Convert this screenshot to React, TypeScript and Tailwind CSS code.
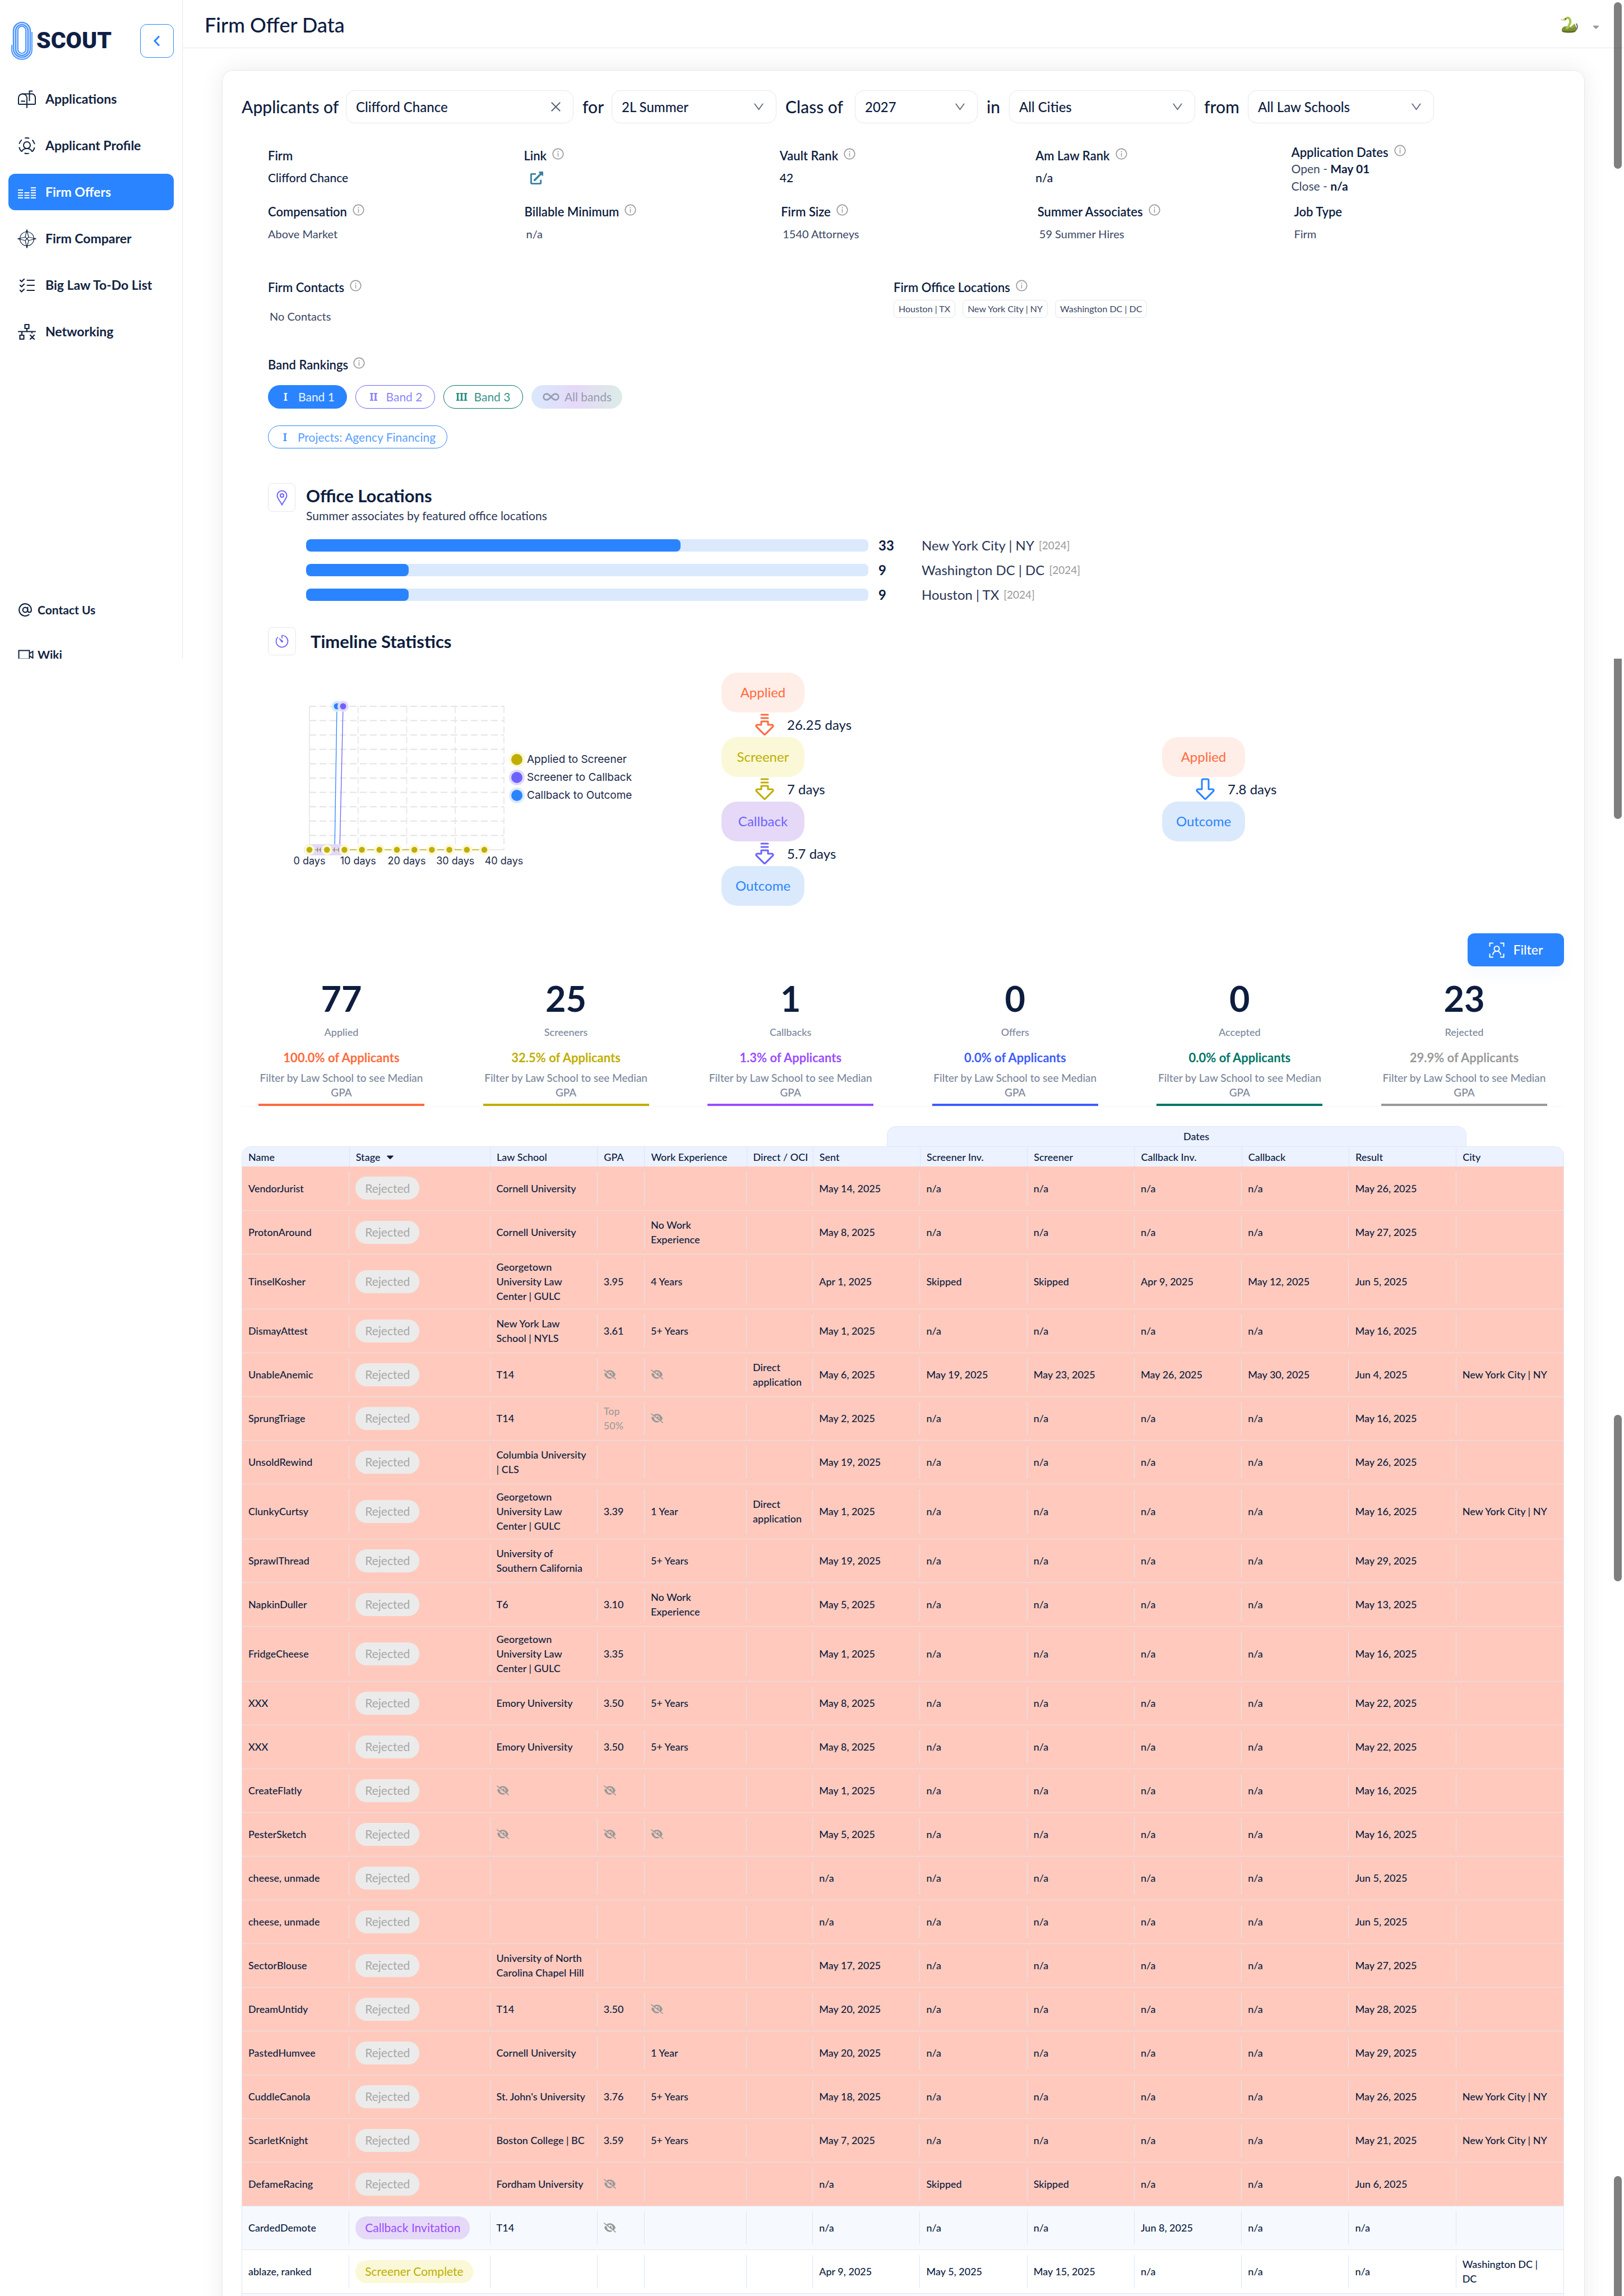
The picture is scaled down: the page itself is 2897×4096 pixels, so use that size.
import React from 'react';
import clsx from 'clsx';
import { AtSign, Infinity as InfinityIcon } from 'lucide-react';
import { AiOutlineClose, AiOutlineDown, AiOutlineInfoCircle } from 'react-icons/ai';
import { FaCaretDown, FaExternalLinkAlt } from 'react-icons/fa';
import { FaEyeSlash } from 'react-icons/fa6';
import { IoTimerOutline } from 'react-icons/io5';
import { TbArrowBigDown, TbArrowBigDownLines } from 'react-icons/tb';

/* ---------- icons ---------- */

const MailboxIcon = () => (
  <svg width="32" height="32" viewBox="0 0 32 32" fill="none" stroke="currentColor" strokeWidth="2" strokeLinecap="round" strokeLinejoin="round">
    <path d="M1 24V13.5a7.5 7 0 0 1 15 0V25H2a1 1 0 0 1-1-1Z" />
    <path d="M8.5 6.5H25a6 7 0 0 1 6 7V24a1 1 0 0 1-1 1H16v6M20.5 18.5V1.5h5M6 19.5h6" />
  </svg>
);

const ProfileIcon = () => (
  <svg width="32" height="32" viewBox="0 0 32 32" fill="none" stroke="currentColor" strokeWidth="2" strokeLinecap="round">
    <circle cx="16" cy="16" r="14" strokeDasharray="7 7.66" strokeDashoffset="3.5" transform="rotate(-90 16 16)" />
    <circle cx="16" cy="15" r="6" />
    <path d="M7 26c1.5-3.5 5-5 9-5s7.5 1.5 9 5" />
  </svg>
);

const BarsIcon = () => (
  <svg width="32" height="32" viewBox="0 0 32 32" fill="none" stroke="currentColor" strokeWidth="2">
    <path d="M0 12h9M0 17h9M0 21.5h9M0 26h9M11.5 17h9M11.5 21.5h9M11.5 26h9M23 8h9M23 12.5h9M23 17h9M23 21.5h9M23 26h9" />
  </svg>
);

const CompassIcon = () => (
  <svg width="34" height="34" viewBox="0 0 34 34" fill="none" stroke="currentColor" strokeWidth="1.2" strokeLinejoin="round">
    <circle cx="17" cy="17" r="12.5" />
    <path fill="white" d="M17 1l3 13 13 3-13 3-3 13-3-13-13-3 13-3Z" />
    <path d="M14 14l6 6M20 14l-6 6" />
    <path fill="currentColor" d="M17 1l1 4h-2ZM17 33l1-4h-2ZM1 17l4-1v2ZM33 17l-4-1v2Z" />
  </svg>
);

const ChecklistIcon = () => (
  <svg width="32" height="32" viewBox="0 0 32 32" fill="none" stroke="currentColor" strokeWidth="2.2" strokeLinecap="round" strokeLinejoin="round">
    <path d="M4 7l2.5 2.5L11 5M4 16l2.5 2.5L11 14M4 25l2.5 2.5L11 23M16.5 7H29M16.5 16H29M16.5 25H29" />
  </svg>
);

const NetworkIcon = () => (
  <svg width="32" height="32" viewBox="0 0 32 32" fill="none" stroke="currentColor" strokeWidth="2.2" strokeLinecap="round" strokeLinejoin="round">
    <path d="M12.5 3h7v7h-7ZM16 10v5M1 15.5h30M7 15.5V22M3.5 22h7v7h-7ZM25 15.5V18M22 22l7 7M29 22l-7 7" />
  </svg>
);

const CameraIcon = () => (
  <svg width="28" height="28" viewBox="0 0 28 28" fill="none" stroke="currentColor" strokeWidth="2">
    <path d="M1.5 6.5h19v15h-19ZM20.5 12l6-4v12l-6-4" />
  </svg>
);

const PinIcon = () => (
  <svg width="20" height="28" viewBox="0 0 20 28" fill="none" stroke="currentColor" strokeWidth="2">
    <path d="M10 26.5C7 20 1.5 15.5 1.5 10a8.5 8.5 0 0 1 17 0c0 5.5-5.5 10-8.5 16.5Z" />
    <circle cx="10" cy="10" r="3" />
  </svg>
);

const ScanUserIcon = () => (
  <svg width="28" height="28" viewBox="0 0 28 28" fill="none" stroke="currentColor" strokeWidth="2" strokeLinecap="round" strokeLinejoin="round">
    <path d="M1.5 7V1.5H7M21 1.5h5.5V7M26.5 21v5.5H21M7 26.5H1.5V21" />
    <circle cx="14" cy="11.5" r="4.5" />
    <path d="M7 22c.5-4 3.5-6 7-6s6.5 2 7 6" />
  </svg>
);

const NumeralIcon = ({ count }: { count: number }) => (
  <svg width="20" height="16" viewBox="0 0 20 16" fill="currentColor">
    {Array.from({ length: count }, (_, i) => {
      const x = 10 - count * 3.5 + i * 7;
      return <path key={i} d={`M${x} 1h6v2h-1.500v10h1.500v2h-6v-2h1.500v-10h-1.500Z`} />;
    })}
  </svg>
);

const SnakeAvatar = () => (
  <svg width="32" height="32" viewBox="0 0 32 32" fill="none">
    <path d="M28 14q4 7-1 12" stroke="#4b4b52" strokeWidth="1.6" />
    <path d="M2 24q2-5 8-5l10 2 6-3q5 5 0 9-6 3-15 3T2 27Z" fill="#7d9138" />
    <path d="M2 26q10 3 26 0-1 4-10 4.500T4 29Z" fill="#5d6f22" />
    <path d="M7 7Q13 1 16 6t-1 11q-1 4-4 5" stroke="#a9c64b" strokeWidth="4" strokeLinecap="round" />
    <path d="M17 21l8-7 2 5-7 4Z" fill="#93aa3c" />
    <circle cx="9" cy="6" r="1" fill="#222" />
    <path d="M5 8L0 7" stroke="#d58f9c" />
  </svg>
);

const LogoMark = () => (
  <svg width="40" height="70" viewBox="0 0 40 70" fill="none" stroke="#2a84ff">
    <rect x="8" y="5" width="24" height="58" rx="12" stroke="#c3dbfb" strokeWidth="9" />
    <rect x="5" y="2" width="30" height="62" rx="15" strokeWidth="1.6" />
    <rect x="9" y="6" width="22" height="55" rx="11" strokeWidth="1.6" />
    <rect x="13" y="9" width="14" height="48" rx="7" strokeWidth="1.6" />
    <path d="M2 42v9a18 17 0 0 0 36 0V19" strokeWidth="1.6" />
  </svg>
);

/* ---------- data ---------- */

const navItems = [
  { label: 'Applications', icon: MailboxIcon },
  { label: 'Applicant Profile', icon: ProfileIcon },
  { label: 'Firm Offers', icon: BarsIcon, active: true },
  { label: 'Firm Comparer', icon: CompassIcon },
  { label: 'Big Law To-Do List', icon: ChecklistIcon },
  { label: 'Networking', icon: NetworkIcon },
];

const offices = [
  { name: 'New York City | NY', count: 33, share: 66.6 },
  { name: 'Washington DC | DC', count: 9, share: 18.2 },
  { name: 'Houston | TX', count: 9, share: 18.2 },
];

const stats = [
  { value: 77, label: 'Applied', pct: '100.0%', text: 'text-[#ff6a3d]', bar: 'bg-[#ff6a3d]' },
  { value: 25, label: 'Screeners', pct: '32.5%', text: 'text-[#c0ae00]', bar: 'bg-[#c0ae00]' },
  { value: 1, label: 'Callbacks', pct: '1.3%', text: 'text-[#9b4dff]', bar: 'bg-[#9b4dff]' },
  { value: 0, label: 'Offers', pct: '0.0%', text: 'text-[#3d5cff]', bar: 'bg-[#3d5cff]' },
  { value: 0, label: 'Accepted', pct: '0.0%', text: 'text-[#007667]', bar: 'bg-[#007667]' },
  { value: 23, label: 'Rejected', pct: '29.9%', text: 'text-[#999999]', bar: 'bg-[#999999]' },
];

const columns = [
  { title: 'Name', width: 'w-[191px]' },
  { title: 'Stage', width: 'w-[251px]' },
  { title: 'Law School', width: 'w-[191px]' },
  { title: 'GPA', width: 'w-[84px]' },
  { title: 'Work Experience', width: 'w-[182px]' },
  { title: 'Direct / OCI', width: 'w-[118px]' },
  { title: 'Sent', width: 'w-[191px]' },
  { title: 'Screener Inv.', width: 'w-[191px]' },
  { title: 'Screener', width: 'w-[191px]' },
  { title: 'Callback Inv.', width: 'w-[191px]' },
  { title: 'Callback', width: 'w-[191px]' },
  { title: 'Result', width: 'w-[191px]' },
  { title: 'City', width: 'w-[191px]' },
];

const HIDDEN = '#hidden';
const GULC = 'Georgetown\nUniversity Law\nCenter | GULC';
const NO_WORK = 'No Work\nExperience';
const DIRECT = 'Direct\napplication';
const NYC = 'New York City | NY';

// name, stage, school, gpa, experience, direct, sent, screener inv, screener, callback inv, callback, result, city
const rows: string[][] = [
  ['VendorJurist', 'Rejected', 'Cornell University', '', '', '', 'May 14, 2025', 'n/a', 'n/a', 'n/a', 'n/a', 'May 26, 2025', ''],
  ['ProtonAround', 'Rejected', 'Cornell University', '', NO_WORK, '', 'May 8, 2025', 'n/a', 'n/a', 'n/a', 'n/a', 'May 27, 2025', ''],
  ['TinselKosher', 'Rejected', GULC, '3.95', '4 Years', '', 'Apr 1, 2025', 'Skipped', 'Skipped', 'Apr 9, 2025', 'May 12, 2025', 'Jun 5, 2025', ''],
  ['DismayAttest', 'Rejected', 'New York Law\nSchool | NYLS', '3.61', '5+ Years', '', 'May 1, 2025', 'n/a', 'n/a', 'n/a', 'n/a', 'May 16, 2025', ''],
  ['UnableAnemic', 'Rejected', 'T14', HIDDEN, HIDDEN, DIRECT, 'May 6, 2025', 'May 19, 2025', 'May 23, 2025', 'May 26, 2025', 'May 30, 2025', 'Jun 4, 2025', NYC],
  ['SprungTriage', 'Rejected', 'T14', 'Top\n50%', HIDDEN, '', 'May 2, 2025', 'n/a', 'n/a', 'n/a', 'n/a', 'May 16, 2025', ''],
  ['UnsoldRewind', 'Rejected', 'Columbia University\n| CLS', '', '', '', 'May 19, 2025', 'n/a', 'n/a', 'n/a', 'n/a', 'May 26, 2025', ''],
  ['ClunkyCurtsy', 'Rejected', GULC, '3.39', '1 Year', DIRECT, 'May 1, 2025', 'n/a', 'n/a', 'n/a', 'n/a', 'May 16, 2025', NYC],
  ['SprawlThread', 'Rejected', 'University of\nSouthern California', '', '5+ Years', '', 'May 19, 2025', 'n/a', 'n/a', 'n/a', 'n/a', 'May 29, 2025', ''],
  ['NapkinDuller', 'Rejected', 'T6', '3.10', NO_WORK, '', 'May 5, 2025', 'n/a', 'n/a', 'n/a', 'n/a', 'May 13, 2025', ''],
  ['FridgeCheese', 'Rejected', GULC, '3.35', '', '', 'May 1, 2025', 'n/a', 'n/a', 'n/a', 'n/a', 'May 16, 2025', ''],
  ['XXX', 'Rejected', 'Emory University', '3.50', '5+ Years', '', 'May 8, 2025', 'n/a', 'n/a', 'n/a', 'n/a', 'May 22, 2025', ''],
  ['XXX', 'Rejected', 'Emory University', '3.50', '5+ Years', '', 'May 8, 2025', 'n/a', 'n/a', 'n/a', 'n/a', 'May 22, 2025', ''],
  ['CreateFlatly', 'Rejected', HIDDEN, HIDDEN, '', '', 'May 1, 2025', 'n/a', 'n/a', 'n/a', 'n/a', 'May 16, 2025', ''],
  ['PesterSketch', 'Rejected', HIDDEN, HIDDEN, HIDDEN, '', 'May 5, 2025', 'n/a', 'n/a', 'n/a', 'n/a', 'May 16, 2025', ''],
  ['cheese, unmade', 'Rejected', '', '', '', '', 'n/a', 'n/a', 'n/a', 'n/a', 'n/a', 'Jun 5, 2025', ''],
  ['cheese, unmade', 'Rejected', '', '', '', '', 'n/a', 'n/a', 'n/a', 'n/a', 'n/a', 'Jun 5, 2025', ''],
  ['SectorBlouse', 'Rejected', 'University of North\nCarolina Chapel Hill', '', '', '', 'May 17, 2025', 'n/a', 'n/a', 'n/a', 'n/a', 'May 27, 2025', ''],
  ['DreamUntidy', 'Rejected', 'T14', '3.50', HIDDEN, '', 'May 20, 2025', 'n/a', 'n/a', 'n/a', 'n/a', 'May 28, 2025', ''],
  ['PastedHumvee', 'Rejected', 'Cornell University', '', '1 Year', '', 'May 20, 2025', 'n/a', 'n/a', 'n/a', 'n/a', 'May 29, 2025', ''],
  ['CuddleCanola', 'Rejected', "St. John's University", '3.76', '5+ Years', '', 'May 18, 2025', 'n/a', 'n/a', 'n/a', 'n/a', 'May 26, 2025', NYC],
  ['ScarletKnight', 'Rejected', 'Boston College | BC', '3.59', '5+ Years', '', 'May 7, 2025', 'n/a', 'n/a', 'n/a', 'n/a', 'May 21, 2025', NYC],
  ['DefameRacing', 'Rejected', 'Fordham University', HIDDEN, '', '', 'n/a', 'Skipped', 'Skipped', 'n/a', 'n/a', 'Jun 6, 2025', ''],
  ['CardedDemote', 'Callback Invitation', 'T14', HIDDEN, '', '', 'n/a', 'n/a', 'n/a', 'Jun 8, 2025', 'n/a', 'n/a', ''],
  ['ablaze, ranked', 'Screener Complete', '', '', '', '', 'Apr 9, 2025', 'May 5, 2025', 'May 15, 2025', 'n/a', 'n/a', 'n/a', 'Washington DC |\nDC'],
];

const stageStyles: Record<string, string> = {
  Rejected: 'bg-[#ebebeb] text-[#a8a8a8]',
  'Callback Invitation': 'bg-[#e5d9f7] text-[#9b4dff]',
  'Screener Complete': 'bg-[#faf8d7] text-[#c0ae00]',
};

/* ---------- sidebar ---------- */

const Sidebar = () => (
  <aside className="w-[326px] h-[1175px] shrink-0 self-start overflow-hidden border-r border-[#e7e7ee]">
    <div className="flex items-center justify-between pl-[19px] pr-[15px] pt-[37px] h-[108px]">
      <a href="#" aria-label="O Scout" className="flex items-center gap-[6px]">
        <LogoMark />
        <span className="font-['Roboto',sans-serif] font-black text-[41px] leading-none text-[#0f1f45]">SCOUT</span>
      </a>
      <button aria-label="Collapse" className="w-[60px] h-[60px] rounded-xl border border-[#2a84ff] flex items-center justify-center text-[#2a84ff]">
        <svg width="14" height="20" viewBox="0 0 14 20" fill="none" stroke="currentColor" strokeWidth="3">
          <path d="M11 1.5L3 10l8 8.5" />
        </svg>
      </button>
    </div>
    <nav className="mt-[36px] px-[15px] flex flex-col gap-[18px]">
      {navItems.map(({ label, icon: Icon, active }) => (
        <a
          key={label}
          href="#"
          className={clsx(
            'h-[65px] rounded-xl flex items-center font-bold text-[23px]',
            active ? 'bg-[#2a84ff] text-white' : 'text-[#11233f]'
          )}
        >
          <span className="w-[66px] flex justify-center">
            <Icon />
          </span>
          {label}
        </a>
      ))}
    </nav>
    <div className="mt-[434px] flex flex-col gap-5 pl-8 font-bold text-[21px] text-[#11233f]">
      <a href="#" className="h-[60px] flex items-center gap-[9px]">
        <AtSign size={26} />
        Contact Us
      </a>
      <a href="#" className="h-[60px] flex items-center gap-[7px]">
        <CameraIcon />
        Wiki
      </a>
    </div>
  </aside>
);

/* ---------- firm details ---------- */

const InfoIcon = () => <AiOutlineInfoCircle size={23} className="text-[#999999] mb-[6px]" />;

interface FieldLabelProps {
  info?: boolean;
  children: React.ReactNode;
}

const FieldLabel: React.FC<FieldLabelProps> = ({ info = true, children }) => (
  <div className="h-7 flex items-center gap-[9px] text-[22px] font-semibold">
    {children}
    {info && <InfoIcon />}
  </div>
);

interface FieldProps {
  label: string;
  info?: boolean;
  light?: boolean;
  className?: string;
  children: React.ReactNode;
}

const Field: React.FC<FieldProps> = ({ label, info = true, light, className, children }) => (
  <div className={className}>
    <FieldLabel info={info}>{label}</FieldLabel>
    <div className={clsx('mt-3 h-7 flex items-center', light ? 'text-[20px] text-[#3b4763]' : 'text-[21px] font-medium')}>{children}</div>
  </div>
);

interface PickerProps {
  id: string;
  value: string;
  width: string;
}

const Picker: React.FC<PickerProps> = ({ id, value, width }) => (
  <div className={clsx('h-[59px] flex items-center rounded-2xl border border-[#e7e7ee] pl-[17px] pr-[19px]', width)}>
    <select id={id} className="flex-1 min-w-0 appearance-none bg-transparent text-[24px] font-medium outline-none">
      <option>{value}</option>
    </select>
    <AiOutlineDown size={23} className="text-[#5b6478] shrink-0" />
  </div>
);

const FilterBar = () => (
  <div className="flex items-center gap-4 text-[30px] font-medium">
    <label htmlFor="firm" className="w-[170px] whitespace-nowrap">Applicants of</label>
    <div className="w-[406px] h-[59px] flex items-center rounded-2xl border border-[#e7e7ee] pl-[17px] pr-[18px]">
      <input id="firm" defaultValue="Clifford Chance" className="flex-1 min-w-0 text-[24px] outline-none" />
      <button aria-label="Clear">
        <AiOutlineClose size={25} className="text-[#5b6478]" />
      </button>
    </div>
    <label htmlFor="season" className="w-[36px]">for</label>
    <Picker id="season" value="2L Summer" width="w-[294px]" />
    <label htmlFor="class" className="w-[108px] whitespace-nowrap">Class of</label>
    <Picker id="class" value="2027" width="w-[219px]" />
    <label htmlFor="city" className="w-[24px]">in</label>
    <Picker id="city" value="All Cities" width="w-[332px]" />
    <label htmlFor="school" className="w-[62px]">from</label>
    <Picker id="school" value="All Law Schools" width="w-[332px]" />
  </div>
);

const FirmDetails = () => (
  <section className="pl-[47px]">
    <div className="mt-[37px] pr-[30px] grid grid-cols-5 h-[91px]">
      <Field label="Firm" info={false} className="pt-[6px]">Clifford Chance</Field>
      <Field label="Link" className="pt-[6px]">
        <a href="#" aria-label="Firm website" className="ml-3 text-[#3a80a2]">
          <FaExternalLinkAlt size={23} />
        </a>
      </Field>
      <Field label="Vault Rank" className="pt-[6px]">42</Field>
      <Field label="Am Law Rank" className="pt-[6px]">n/a</Field>
      <div>
        <FieldLabel>Application Dates</FieldLabel>
        <p className="text-[21px] leading-[31px] text-[#3b4763]">
          Open - <strong className="text-[#0d1d3f]">May 01</strong>
        </p>
        <p className="text-[21px] leading-[31px] text-[#3b4763]">
          Close - <strong className="text-[#0d1d3f]">n/a</strong>
        </p>
      </div>
    </div>
    <div className="mt-[15px] pr-6 grid grid-cols-5">
      <Field label="Compensation" light>Above Market</Field>
      <Field label="Billable Minimum" light><span className="px-[3px]">n/a</span></Field>
      <Field label="Firm Size" light><span className="px-[3px]">1540 Attorneys</span></Field>
      <Field label="Summer Associates" light><span className="px-[3px]">59 Summer Hires</span></Field>
      <Field label="Job Type" info={false} light>Firm</Field>
    </div>
    <div className="mt-[67px] pr-[80px] grid grid-cols-2">
      <div>
        <FieldLabel>Firm Contacts</FieldLabel>
        <p className="mt-[24px] pl-[3px] text-[20px] leading-[28px] text-[#3b4763]">No Contacts</p>
      </div>
      <div>
        <FieldLabel>Firm Office Locations</FieldLabel>
        <div className="mt-[9px] flex gap-[13px] text-[16px] text-[#3b4763]">
          <span className="h-8 px-2 flex items-center rounded-lg border border-[#e7e7ee]">Houston | TX</span>
          <span className="h-8 px-2 flex items-center rounded-lg border border-[#e7e7ee]">New York City | NY</span>
          <span className="h-8 px-2 flex items-center rounded-lg border border-[#e7e7ee]">Washington DC | DC</span>
        </div>
      </div>
    </div>

    <div className="mt-[58px] flex items-center gap-2 text-[22px] font-semibold">
      <FieldLabel info={false}>Band Rankings</FieldLabel>
      <InfoIcon />
    </div>
    <div className="mt-[22px] flex gap-[15px] text-[21px]">
      <button className="w-[141px] h-[42px] rounded-full bg-[#2a84ff] text-white/90 flex items-center justify-center gap-3">
        <NumeralIcon count={1} /> Band 1
      </button>
      <button className="w-[142px] h-[42px] rounded-full border border-[#6c63ff] text-[#6c63ff]/80 flex items-center justify-center gap-3">
        <NumeralIcon count={2} /> Band 2
      </button>
      <button className="w-[142px] h-[42px] rounded-full border border-[#007667] text-[#007667]/80 flex items-center justify-center gap-3">
        <NumeralIcon count={3} /> Band 3
      </button>
      <button className="w-[162px] h-[42px] rounded-full bg-linear-to-r from-[#d9e8fd] via-[#e5d9f7] to-[#dcece6] text-[#949cb0] flex items-center justify-center gap-2">
        <InfinityIcon size={32} strokeWidth={2} /> All bands
      </button>
    </div>
    <button className="mt-[30px] w-[320px] h-[41px] rounded-full border border-[#2a84ff] text-[#2a84ff]/80 flex items-center justify-center gap-3 text-[21px]">
      <NumeralIcon count={1} /> Projects: Agency Financing
    </button>
  </section>
);

/* ---------- office locations ---------- */

const OfficeLocations = () => (
  <section className="mt-[62px] pl-[47px] flex items-start gap-[19px]">
    <div className="w-[49px] h-[51px] rounded-lg border border-[#e7e7ee] flex items-center justify-center text-[#6c63ff]">
      <PinIcon />
    </div>
    <div className="pt-1">
      <h2 className="text-[31px] leading-[36px] font-bold">Office Locations</h2>
      <p className="mt-1 text-[21px] leading-[28px] text-[#2a3655]">Summer associates by featured office locations</p>
      <div className="mt-[17px]">
        {offices.map((office) => (
          <div key={office.name} className="h-11 flex items-center text-[24px]">
            <div className="w-[1003px] h-[22px] rounded-lg bg-[#dbe9fd] overflow-hidden">
              <div className="h-full rounded-lg bg-[#2a84ff]" style={{ width: `${office.share}%` }} />
            </div>
            <span className="ml-[18px] w-[77px] font-bold">{office.count}</span>
            <span className="text-[#2a3655]">{office.name}</span>
            <span className="ml-[8px] text-[19px] text-[#999999]">[2024]</span>
          </div>
        ))}
      </div>
    </div>
  </section>
);

/* ---------- timeline ---------- */

const LEFT = 74;
const TOP = 61;
const WIDTH = 347;
const HEIGHT = 256;
const BOTTOM = TOP + HEIGHT;

const legend = [
  { label: 'Applied to Screener', color: '#c0ae00', halo: '#faf8d7' },
  { label: 'Screener to Callback', color: '#6c63ff', halo: '#e5d9f7' },
  { label: 'Callback to Outcome', color: '#2a84ff', halo: '#dbe9fd' },
];

const TimelineChart = () => (
  <svg width="700" height="417" viewBox="0 0 700 417" className="font-['Inter',sans-serif]">
    <g stroke="#e4e4e4" strokeWidth="2" strokeDasharray="12 6">
      {Array.from({ length: 10 }, (_, i) => (
        <path key={i} d={`M${LEFT} ${TOP + (i * HEIGHT) / 10}H${LEFT + WIDTH}`} />
      ))}
      {[1, 2, 3, 4].map((i) => (
        <path key={i} strokeWidth="1.5" d={`M${LEFT + (i * WIDTH) / 4} ${TOP}V${BOTTOM}`} />
      ))}
    </g>
    <path d={`M${LEFT} ${TOP}V${BOTTOM}H${LEFT + WIDTH}`} fill="none" stroke="#e4e4e4" strokeWidth="1.5" />
    <path d={`M119 ${BOTTOM}L123 ${TOP}`} stroke="#2a84ff" strokeWidth="1.3" />
    <path d={`M128 ${BOTTOM}L134 ${TOP}`} stroke="#6c63ff" strokeWidth="1.3" />
    <circle cx="123" cy={TOP} r="10" fill="#dbe9fd" />
    <circle cx="123" cy={TOP} r="5.5" fill="#2a84ff" />
    <circle cx="134" cy={TOP} r="10" fill="#e5d9f7" />
    <circle cx="134" cy={TOP} r="5.5" fill="#6c63ff" />
    <rect x="64" y={BOTTOM - 10} width="74" height="20" rx="10" fill="#e3d9f7" />
    {[89, 94, 119, 127].map((x) => (
      <path key={x} d={`M${x} ${BOTTOM - 4}q-3 4 0 8`} fill="#6c63ff" stroke="#6c63ff" />
    ))}
    <path d={`M${LEFT} ${BOTTOM}H386`} stroke="#c0ae00" strokeWidth="1.3" />
    {Array.from({ length: 11 }, (_, i) => (
      <g key={i}>
        <circle cx={LEFT + i * 31.2} cy={BOTTOM} r="9.6" fill="#faf8d7" />
        <circle cx={LEFT + i * 31.2} cy={BOTTOM} r="5.3" fill="#c0ae00" />
      </g>
    ))}
    <g fill="#1b2a4a">
      {[0, 10, 20, 30, 40].map((d) => (
        <text key={d} x={LEFT + (d * WIDTH) / 40} y="343" fontSize="18" textAnchor="middle">{d} days</text>
      ))}
      {legend.map(({ label, color, halo }, i) => (
        <g key={label}>
          <circle cx="444" cy={156 + i * 32} r="14" fill={halo} />
          <circle cx="444" cy={156 + i * 32} r="10" fill={color} />
          <text x="462" y={162 + i * 32} fontSize="19">{label}</text>
        </g>
      ))}
    </g>
  </svg>
);

const stepStyles = {
  Applied: 'bg-[#ffede7] text-[#ff6a3d]',
  Screener: 'bg-[#faf8d7] text-[#c0ae00]',
  Callback: 'bg-[#e5d9f7] text-[#6c63ff]',
  Outcome: 'bg-[#dbe9fd] text-[#2a84ff]',
};

const Step = ({ name }: { name: keyof typeof stepStyles }) => (
  <div className={clsx('w-[148px] h-[71px] rounded-[28px] flex items-center justify-center text-[24px]', stepStyles[name])}>{name}</div>
);

const Gap = ({ days, color, plain }: { days: string; color: string; plain?: boolean }) => {
  const Icon = plain ? TbArrowBigDown : TbArrowBigDownLines;
  return (
    <div className="h-11 pl-[53px] flex items-center gap-4 text-[24px]">
      <Icon size={48} strokeWidth={1.5} className={clsx('shrink-0', color)} />
      {days} days
    </div>
  );
};

const Timeline = () => (
  <section className="mt-9 pl-[47px]">
    <div className="flex items-center gap-[26px]">
      <div className="w-[50px] h-[50px] rounded-lg border border-[#e7e7ee] flex items-center justify-center text-[#6c63ff]">
        <IoTimerOutline size={28} />
      </div>
      <h2 className="text-[31px] leading-[36px] font-bold">Timeline Statistics</h2>
    </div>
    <div className="mt-[30px] flex items-center">
      <div className="w-[809px]">
        <TimelineChart />
      </div>
      <div className="w-[786px]">
        <Step name="Applied" />
        <Gap days="26.25" color="text-[#ff6a3d]" />
        <Step name="Screener" />
        <Gap days="7" color="text-[#c0ae00]" />
        <Step name="Callback" />
        <Gap days="5.7" color="text-[#6c63ff]" />
        <Step name="Outcome" />
      </div>
      <div>
        <Step name="Applied" />
        <Gap days="7.8" color="text-[#2a84ff]" plain />
        <Step name="Outcome" />
      </div>
    </div>
  </section>
);

/* ---------- stats ---------- */

const StatsRow = () => (
  <section className="mt-[19px] px-[30px] flex justify-between border-b border-[#f7f7fa]">
    {stats.map((stat) => (
      <div key={stat.label} className="w-[296px] text-center font-medium text-[#7d879c]">
        <div className="text-[63px] leading-[76px] font-bold text-[#0d1d3f]">{stat.value}</div>
        <div className="mt-2 text-[18px] leading-[28px]">{stat.label}</div>
        <div className={clsx('mt-[17px] text-[22px] leading-[30px] font-bold', stat.text)}>{stat.pct} of Applicants</div>
        <p className="mt-2 text-[19px] leading-[26px]">Filter by Law School to see Median GPA</p>
        <div className={clsx('mt-[7px] h-1', stat.bar)} />
      </div>
    ))}
  </section>
);

/* ---------- applicants table ---------- */

const CellContent = ({ value, column }: { value: string; column: number }) => {
  if (value === HIDDEN) return <FaEyeSlash size={22} className="text-[#999999]" />;
  if (column === 1) {
    return <span className={clsx('h-[41px] px-[17px] rounded-[20px] flex items-center text-[21px] font-normal whitespace-nowrap', stageStyles[value])}>{value}</span>;
  }
  return <span className={clsx('whitespace-pre', value.startsWith('Top') && 'text-[#a39a9a]')}>{value}</span>;
};

const ApplicantsTable = () => (
  <section className="mt-[35px]">
    <div className="ml-[1151px] w-[1034px] h-9 pl-[70px] flex items-center justify-center rounded-t-2xl border border-b-0 border-[#e2e9f6] bg-[#ecf2ff] text-[18px] font-medium">
      Dates
    </div>
    <div className="rounded-t-2xl border border-[#e2e6ee] overflow-hidden">
      <table className="w-full table-fixed border-collapse text-left text-[18px] leading-[26px] font-medium">
        <thead>
          <tr className="h-[35px] bg-[#ecf2ff]">
            {columns.map(({ title, width }) => (
              <th key={title} scope="col" className={clsx('pl-[11px] font-medium whitespace-nowrap border-r border-[#dbe6f7] last:border-r-0', width)}>
                {title === 'Stage' ? (
                  <button className="flex items-center gap-2">
                    Stage <FaCaretDown size={20} />
                  </button>
                ) : (
                  title
                )}
              </th>
            ))}
          </tr>
        </thead>
        <tbody>
          {rows.map((row, r) => (
            <tr
              key={r}
              className={clsx(
                'border-b border-[#e3e3ea]',
                row[2] === GULC ? 'h-[98px]' : 'h-[78px]',
                row[1] === 'Rejected' ? 'bg-[#ffcabd]' : row[1] === 'Callback Invitation' ? 'bg-[#f6faff]' : 'bg-white'
              )}
            >
              {row.map((value, c) => (
                <td key={c} className="h-px p-0 py-[9px]">
                  <div className={clsx('h-full pl-[11px] flex items-center', c < 12 && 'border-r border-[#dbe6f5]')}>
                    <CellContent value={value} column={c} />
                  </div>
                </td>
              ))}
            </tr>
          ))}
          <tr className="h-[78px] bg-[#f6faff]">
            <td colSpan={13} />
          </tr>
        </tbody>
      </table>
    </div>
  </section>
);

/* ---------- page ---------- */

// overlay scroll thumbs down the right edge
const ScrollThumbs = () => (
  <div aria-hidden="true" className="absolute top-0 right-1 w-[14px] h-full flex flex-col overflow-hidden">
    <div className="mt-1 h-[297px] shrink-0 rounded-full bg-black/50" />
    <div className="mt-[874px] h-[286px] shrink-0 rounded-b-full bg-black/50" />
    <div className="mt-[1063px] h-[297px] shrink-0 rounded-full bg-black/50" />
    <div className="mt-[1061px] flex-1 rounded-t-full bg-black/50" />
  </div>
);

export default function App() {
  return (
    <div className="relative h-screen overflow-hidden flex bg-white text-[#0d1d3f] font-['Lato','Open_Sans',sans-serif]">
      <Sidebar />
      <div className="flex-1 min-w-0">
        <header className="h-[86px] pl-[39px] pr-[41px] pt-[2px] flex items-center justify-between border-b border-[#e7e7ee]">
          <h1 className="text-[36px] font-medium">Firm Offer Data</h1>
          <button aria-label="Account" className="flex items-center gap-[22px]">
            <SnakeAvatar />
            <FaCaretDown size={18} className="text-[#999999] mt-2" />
          </button>
        </header>
        <main className="mt-[39px] ml-[70px] mr-[70px] pl-[34px] pr-[36px] pt-[35px] rounded-t-[20px] border border-[#e7e7ee] shadow-[0_0_40px_rgba(0,0,0,0.08)]">
          <FilterBar />
          <FirmDetails />
          <OfficeLocations />
          <Timeline />
          <div className="mt-[49px] flex justify-end">
            <button className="w-[172px] h-[59px] rounded-xl bg-[#2a84ff] text-white flex items-center justify-center gap-4 text-[23px] font-medium shadow-[0_16px_24px_rgba(42,132,255,0.04)]">
              <ScanUserIcon />
              Filter
            </button>
          </div>
          <StatsRow />
          <ApplicantsTable />
        </main>
      </div>
      <ScrollThumbs />
    </div>
  );
}
